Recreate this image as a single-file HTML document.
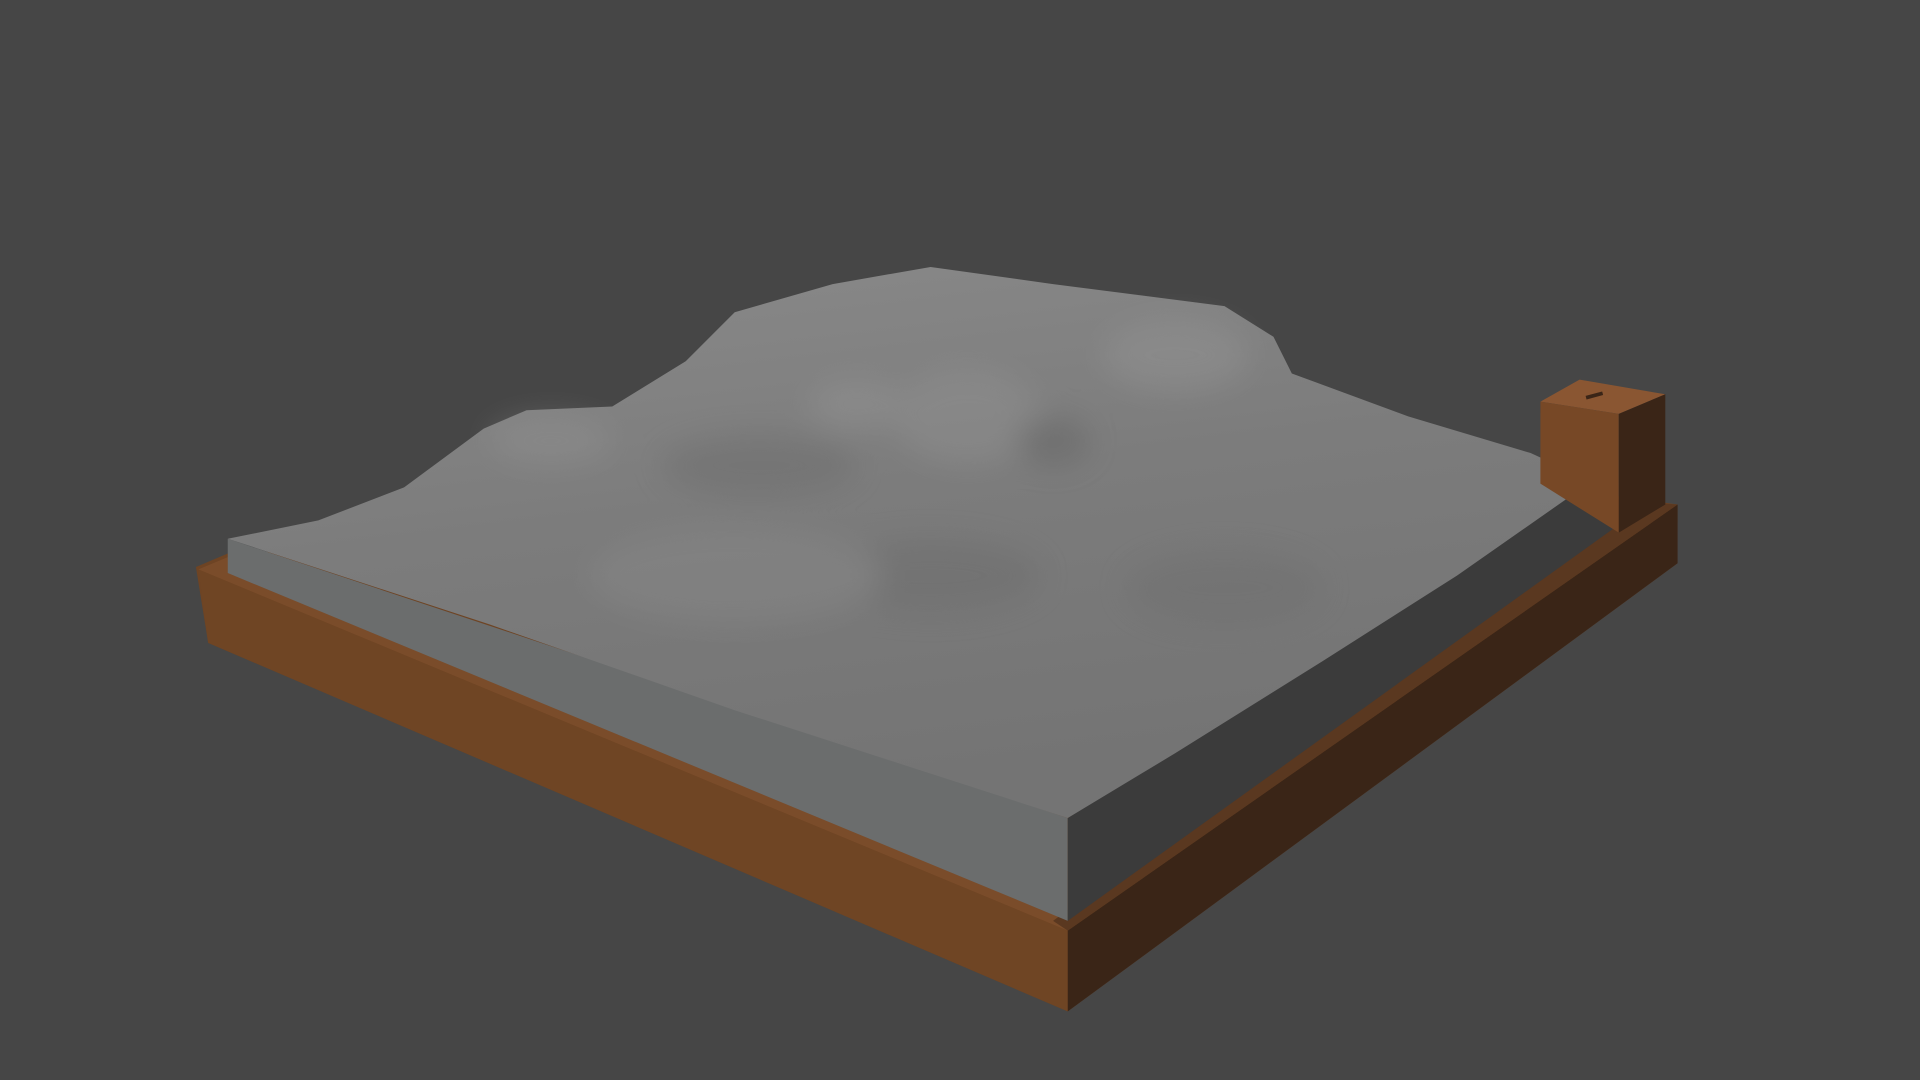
<!DOCTYPE html>
<html><head><meta charset="utf-8"><style>
html,body{margin:0;padding:0;background:#464646;width:1920px;height:1080px;overflow:hidden}
svg{display:block}
</style></head><body>
<svg width="1920" height="1080" viewBox="0 0 1568 882" preserveAspectRatio="none">
<defs>
<linearGradient id="tg" x1="0" y1="0" x2="0.3" y2="1">
<stop offset="0" stop-color="#8a8a8a"/><stop offset="0.5" stop-color="#7c7c7c"/><stop offset="1" stop-color="#747474"/>
</linearGradient>
<filter id="b"><feGaussianBlur stdDeviation="12"/></filter>
</defs>
<rect width="1568" height="882" fill="#464646"/>
<polygon points="160,463 186,452 1320,405 1370,412 1370,460 872,826 170,525" fill="#6e4424"/>
<polygon points="162,465 872,760 872,826 170,525" fill="#6f4524"/>
<polygon points="872,760 1370,412 1370,460 872,826" fill="#3a2517"/>
<polygon points="162,465 186,455 872,745 872,760" fill="#7a4c2a"/>
<polygon points="1320,408 1370,412 872,760 860,752" fill="#5a3820"/>
<polygon points="186,440 872,668 872,752 186,468" fill="#6b6d6d"/>
<polygon points="872,668 1300,393 1320,400 1320,430 872,752" fill="#3b3b3b"/>
<polygon points="186,440 260,425 330,398 395,350 430,335 500,332 560,295 600,255 680,232 760,218 860,232 1000,250 1040,275 1055,305 1150,340 1250,370 1300,393 1190,470 1080,540 960,615 872,668 600,580 400,510" fill="url(#tg)"/>
<g filter="url(#b)" opacity="0.35">
<ellipse cx="960" cy="290" rx="60" ry="30" fill="#9a9a9a"/>
<ellipse cx="790" cy="340" rx="60" ry="40" fill="#969696"/>
<ellipse cx="860" cy="360" rx="30" ry="20" fill="#5a5a5a"/>
<ellipse cx="700" cy="330" rx="40" ry="20" fill="#9a9a9a"/>
<ellipse cx="620" cy="380" rx="80" ry="25" fill="#666"/>
<ellipse cx="760" cy="470" rx="90" ry="30" fill="#686868"/>
<ellipse cx="450" cy="360" rx="50" ry="20" fill="#959595"/>
<ellipse cx="1000" cy="480" rx="80" ry="30" fill="#6c6c6c"/>
<ellipse cx="600" cy="470" rx="120" ry="40" fill="#8c8c8c"/>
</g>
<polygon points="1258,328 1290,310 1360,322 1322,338" fill="#8a5632"/>
<polygon points="1258,328 1322,338 1322,435 1258,395" fill="#774826"/>
<polygon points="1322,338 1360,322 1360,412 1322,435" fill="#3a2517"/>
<rect x="1295" y="322" width="14" height="3" fill="#3a2517" transform="rotate(-15 1300 323)"/>
</svg>
</body></html>
